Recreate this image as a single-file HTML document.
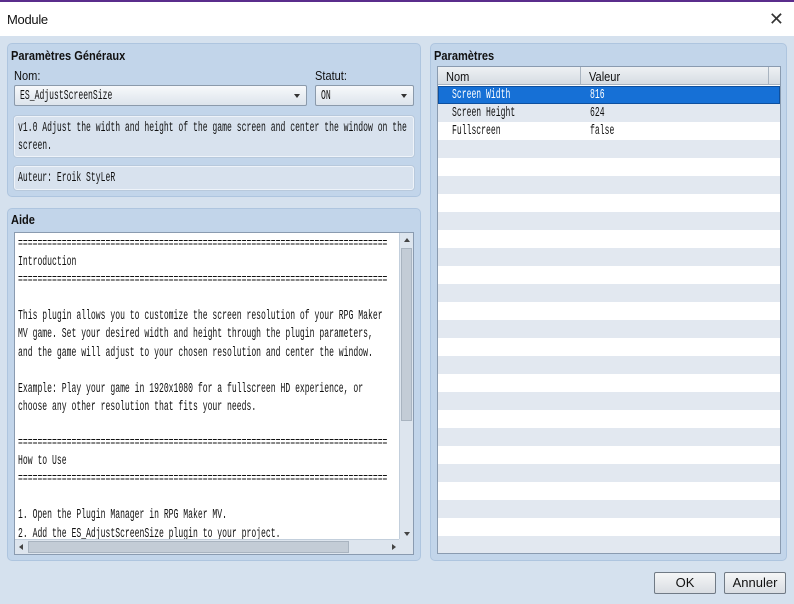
<!DOCTYPE html>
<html><head><meta charset="utf-8"><style>
*{box-sizing:border-box;margin:0;padding:0}
body{width:794px;height:604px;overflow:hidden;background:#d5e1ee;font-family:"Liberation Sans",sans-serif;font-size:12px;color:#111;position:relative}
.abs{position:absolute}
.title{left:0;top:0;width:794px;height:36px;background:#fff;border-top:2px solid #5a2d8c}
.title span{position:absolute;left:7px;top:10px;font-size:13px;letter-spacing:-0.3px}
.close{position:absolute;right:10px;top:7px;font-size:18px;color:#333}
.panel{background:#c2d5ea;border:1px solid #aec5df;border-radius:5px}
.h{font-weight:bold;font-size:13px;transform:scaleX(0.85);transform-origin:0 0;white-space:nowrap}
.lbl{font-size:13px;transform:scaleX(0.85);transform-origin:0 0;white-space:nowrap}
.mono{font-family:"Liberation Mono",monospace;font-size:13.5px;transform:scaleX(0.6);transform-origin:0 0;white-space:pre;display:block}
.combo{background:linear-gradient(#f7f9fb,#dde4ec);border:1px solid #8b9aab;border-radius:2px;height:21px}
.combo .arr{position:absolute;right:6px;top:8px;width:0;height:0;border-left:3px solid transparent;border-right:3px solid transparent;border-top:4px solid #333}
.box{background:#d8e2ee;border:1px solid #eef3f9;border-radius:3px;box-shadow:0 0 0 1px #b8c9dc}
.row{position:absolute;left:0;width:100%;height:18px}
.btn{background:linear-gradient(#f5f6f7,#d9dde2);border:1px solid #707a85;border-radius:2px;text-align:center;font-size:13px;line-height:20px}
</style></head><body>
<div class="abs title"><span>Module</span><div class="close">✕</div></div>

<div class="abs panel" style="left:7px;top:43px;width:414px;height:154px"></div>
<div class="abs h" style="left:11px;top:48px">Paramètres Généraux</div>
<div class="abs lbl" style="left:14px;top:68px">Nom:</div>
<div class="abs lbl" style="left:315px;top:68px">Statut:</div>
<div class="abs combo" style="left:14px;top:85px;width:293px"><span class="mono" style="position:absolute;left:5px;top:3px">ES_AdjustScreenSize</span><div class="arr"></div></div>
<div class="abs combo" style="left:315px;top:85px;width:99px"><span class="mono" style="position:absolute;left:5px;top:3px">ON</span><div class="arr"></div></div>
<div class="abs box" style="left:14px;top:116px;width:400px;height:41px"><span class="mono" style="position:absolute;left:3px;top:3px;line-height:18px">v1.0 Adjust the width and height of the game screen and center the window on the
screen.</span></div>
<div class="abs box" style="left:14px;top:166px;width:400px;height:24px"><span class="mono" style="position:absolute;left:3px;top:4px">Auteur: Eroik StyLeR</span></div>

<div class="abs panel" style="left:7px;top:208px;width:414px;height:353px"></div>
<div class="abs h" style="left:11px;top:212px">Aide</div>
<div class="abs" style="left:14px;top:232px;width:400px;height:323px;background:#fff;border:1px solid #8a9bb0;overflow:hidden">
<span class="mono" style="position:absolute;left:3px;top:3px;line-height:18.1px">============================================================================
Introduction
============================================================================

This plugin allows you to customize the screen resolution of your RPG Maker
MV game. Set your desired width and height through the plugin parameters,
and the game will adjust to your chosen resolution and center the window.

Example: Play your game in 1920x1080 for a fullscreen HD experience, or
choose any other resolution that fits your needs.

============================================================================
How to Use
============================================================================

1. Open the Plugin Manager in RPG Maker MV.
2. Add the ES_AdjustScreenSize plugin to your project.</span>
<div class="abs" style="right:0;top:0;width:14px;height:307px;background:#dde5ee;border-left:1px solid #c3cfdc">
 <div class="abs" style="left:4px;top:5px;border-left:3px solid transparent;border-right:3px solid transparent;border-bottom:4px solid #444"></div>
 <div class="abs" style="left:1px;top:15px;width:11px;height:173px;background:#c3ccd6;border:1px solid #a9b4c0"></div>
 <div class="abs" style="left:4px;bottom:4px;border-left:3px solid transparent;border-right:3px solid transparent;border-top:4px solid #444"></div>
</div>
<div class="abs" style="left:0;bottom:0;width:386px;height:15px;background:#dde5ee;border-top:1px solid #c3cfdc">
 <div class="abs" style="left:4px;top:4px;border-top:3px solid transparent;border-bottom:3px solid transparent;border-right:4px solid #444"></div>
 <div class="abs" style="left:13px;top:1px;width:321px;height:12px;background:#c3ccd6;border:1px solid #a9b4c0"></div>
 <div class="abs" style="right:5px;top:4px;border-top:3px solid transparent;border-bottom:3px solid transparent;border-left:4px solid #444"></div>
</div>
<div class="abs" style="right:0;bottom:0;width:14px;height:15px;background:#dde5ee"></div>
</div>

<div class="abs panel" style="left:430px;top:43px;width:357px;height:518px"></div>
<div class="abs h" style="left:434px;top:48px">Paramètres</div>
<div class="abs" style="left:437px;top:66px;width:344px;height:488px;background:#fff;border:1px solid #8a9bb0;overflow:hidden">
 <div class="row" style="top:0;background:linear-gradient(#eef1f4,#d6dce3);border-bottom:1px solid #a9b4c0"></div>
 <div class="abs" style="left:142px;top:0;height:18px;border-left:1px solid #a9b4c0"></div>
 <div class="abs" style="left:330px;top:0;height:18px;border-left:1px solid #a9b4c0"></div>
 <div class="abs lbl" style="left:8px;top:2px">Nom</div>
 <div class="abs lbl" style="left:151px;top:2px">Valeur</div>
 <div class="row" style="top:19px;background:#1670d6;border:1px solid #0d4f9e"></div>
 <div class="row" style="top:37px;background:#e2e8f0"></div>
 <div class="row" style="top:73px;background:#e2e8f0"></div>
 <div class="row" style="top:109px;background:#e2e8f0"></div>
 <div class="row" style="top:145px;background:#e2e8f0"></div>
 <div class="row" style="top:181px;background:#e2e8f0"></div>
 <div class="row" style="top:217px;background:#e2e8f0"></div>
 <div class="row" style="top:253px;background:#e2e8f0"></div>
 <div class="row" style="top:289px;background:#e2e8f0"></div>
 <div class="row" style="top:325px;background:#e2e8f0"></div>
 <div class="row" style="top:361px;background:#e2e8f0"></div>
 <div class="row" style="top:397px;background:#e2e8f0"></div>
 <div class="row" style="top:433px;background:#e2e8f0"></div>
 <div class="row" style="top:469px;background:#e2e8f0"></div>
 <span class="mono abs" style="left:14px;top:21px;color:#fff">Screen Width</span>
 <span class="mono abs" style="left:152px;top:21px;color:#fff">816</span>
 <span class="mono abs" style="left:14px;top:39px">Screen Height</span>
 <span class="mono abs" style="left:152px;top:39px">624</span>
 <span class="mono abs" style="left:14px;top:57px">Fullscreen</span>
 <span class="mono abs" style="left:152px;top:57px">false</span>
</div>

<div class="abs btn" style="left:654px;top:572px;width:62px;height:22px">OK</div>
<div class="abs btn" style="left:724px;top:572px;width:62px;height:22px">Annuler</div>
</body></html>
